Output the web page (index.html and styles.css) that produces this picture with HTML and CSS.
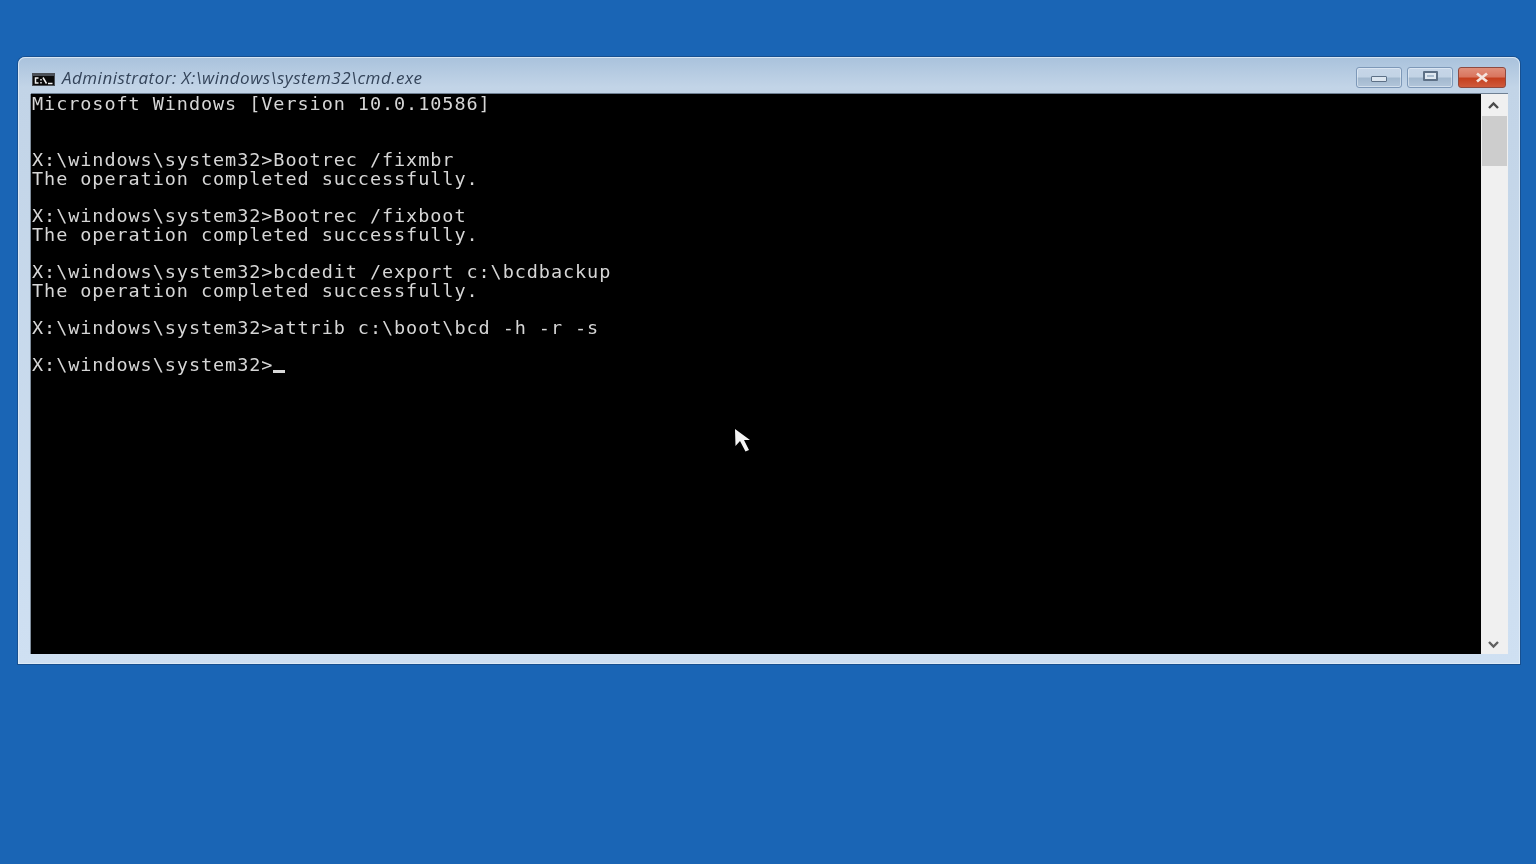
FILE: index.html
```html
<!DOCTYPE html>
<html lang="en">
<head>
<meta charset="utf-8">
<title>Administrator: X:\windows\system32\cmd.exe</title>
<link rel="stylesheet" href="styles.css">
</head>
<body>
<div class="window">
  <div class="titlebar">
    <svg class="app-icon" width="23" height="13" viewBox="0 0 23 13">
      <rect x="0" y="0" width="23" height="13" fill="#4a4f56"/>
      <rect x="1" y="3" width="21" height="9" fill="#0a0a0a"/>
      <path d="M6.500 5H3.500V10H6.500M9 6V7.500M9 9V10.500M11 4.500L14.500 10.500M16 10.500H20.500" stroke="#f0f0f0" stroke-width="1.500" fill="none"/>
    </svg>
    <span class="title">Administrator: X:\windows\system32\cmd.exe</span>
    <div class="controls">
      <div class="btn">
        <span class="glyph-min"></span>
      </div>
      <div class="btn">
        <span class="glyph-max"></span>
      </div>
      <div class="btn btn-close">
        <svg width="16" height="11" viewBox="0 0 16 11"><path d="M3 1.500L13 9.500M13 1.500L3 9.500" stroke="#f4e4de" stroke-width="2.800" fill="none"/></svg>
      </div>
    </div>
  </div>
  <div class="client">
    <pre class="console">Microsoft Windows [Version 10.0.10586]


X:\windows\system32&gt;Bootrec /fixmbr
The operation completed successfully.

X:\windows\system32&gt;Bootrec /fixboot
The operation completed successfully.

X:\windows\system32&gt;bcdedit /export c:\bcdbackup
The operation completed successfully.

X:\windows\system32&gt;attrib c:\boot\bcd -h -r -s

X:\windows\system32&gt;<span class="caret"></span></pre>
    <div class="scrollbar">
      <svg class="arrow" width="27" height="22" viewBox="0 0 27 22"><path d="M8 14L12.500 9.500L17 14" stroke="#4a4a4a" stroke-width="2.400" fill="none"/></svg>
      <div class="thumb"></div>
      <div class="track"></div>
      <svg class="arrow" width="27" height="22" viewBox="0 0 27 22"><path d="M8 10L12.500 14.500L17 10" stroke="#606060" stroke-width="2.400" fill="none"/></svg>
    </div>
    <svg class="cursor" width="18" height="26" viewBox="0 0 18 26"><path d="M1 1L1.500 18L6 13L11.500 23.500L15 22L10 12L16 12Z" fill="#f4f4f4"/></svg>
  </div>
</div>
</body>
</html>
```
FILE: styles.css
```css
html, body { margin: 0; height: 100%; }
body {
  background: #1a65b5;
  padding: 57px 16px 0 18px;
  box-sizing: border-box;
  height: 864px;
  overflow: hidden;
}
.window {
  height: 607px;
  box-sizing: border-box;
  padding: 0 12px 10px 13px;
  border-radius: 7px 7px 0 0;
  background: linear-gradient(180deg, #a9c2dc 0, #c2d4e7 30px, #cfe0f2 100%);
  box-shadow: inset 0 0 0 1px rgba(225,236,247,.85), 0 0 0 1px rgba(20,60,110,.5);
  display: flex;
  flex-direction: column;
  filter: blur(.6px);
}
.titlebar {
  height: 37px;
  display: flex;
  align-items: center;
  flex: none;
  padding-top: 6px;
  box-sizing: border-box;
}
.app-icon { margin: 1px 7px 0 1px; flex: none; }
.title {
  font: italic 17px "Open Sans", "Liberation Sans", sans-serif;
  color: #34445a;
  letter-spacing: .48px;
  margin-top: -2px;
}
.controls {
  margin-left: auto;
  display: flex;
  gap: 5px;
  margin-right: 2px;
  margin-top: -3px;
}
.btn {
  width: 46px;
  height: 21px;
  box-sizing: border-box;
  border: 1px solid #7d98b8;
  border-radius: 3px;
  background: linear-gradient(180deg, #c6d6e8 0, #c2d3e5 45%, #a3b9cf 55%, #b2c6da 100%);
  box-shadow: inset 0 0 0 1px rgba(235,242,250,.55);
  display: flex;
  align-items: center;
  justify-content: center;
}
.btn-close {
  width: 48px;
  border-color: #8f4a40;
  background: linear-gradient(180deg, #e08f7b 0, #d9765f 45%, #c5401f 55%, #cf5a3c 100%);
  box-shadow: none;
}
.glyph-min {
  width: 16px;
  height: 6px;
  box-sizing: border-box;
  margin-top: 4px;
  border: 1px solid #5d7086;
  background: #dce6f0;
  border-radius: 1px;
}
.glyph-max {
  width: 15px;
  height: 10px;
  box-sizing: border-box;
  border: 2px solid #5d7086;
  background: #a9bccf;
  border-radius: 1px;
  box-shadow: inset 0 0 0 2px #dfe8f1;
  margin-top: -2px;
}
.client {
  position: relative;
  flex: 1;
  min-height: 0;
  display: flex;
  box-shadow: 0 -1px 0 #6f8093, -1px 0 0 #7f8d9c;
}
.console {
  flex: 1;
  min-width: 0;
  margin: 0;
  padding: 1px 0 0 1px;
  background: #000;
  color: #d6d6d6;
  font: 18.500px/18.670px "DejaVu Sans Mono", "Liberation Mono", monospace;
  letter-spacing: .93px;
  overflow: hidden;
}
.caret {
  display: inline-block;
  width: 12px;
  height: 3px;
  background: #d8d8d8;
  vertical-align: -2px;
}
.scrollbar {
  width: 27px;
  flex: none;
  background: #f0f0f0;
  display: flex;
  flex-direction: column;
}
.arrow { flex: none; display: block; }
.thumb { height: 50px; margin: 0 1px; flex: none; background: #cdcdcd; }
.track { flex: 1; }
.cursor {
  position: absolute;
  left: 703px;
  top: 334px;
}
```
